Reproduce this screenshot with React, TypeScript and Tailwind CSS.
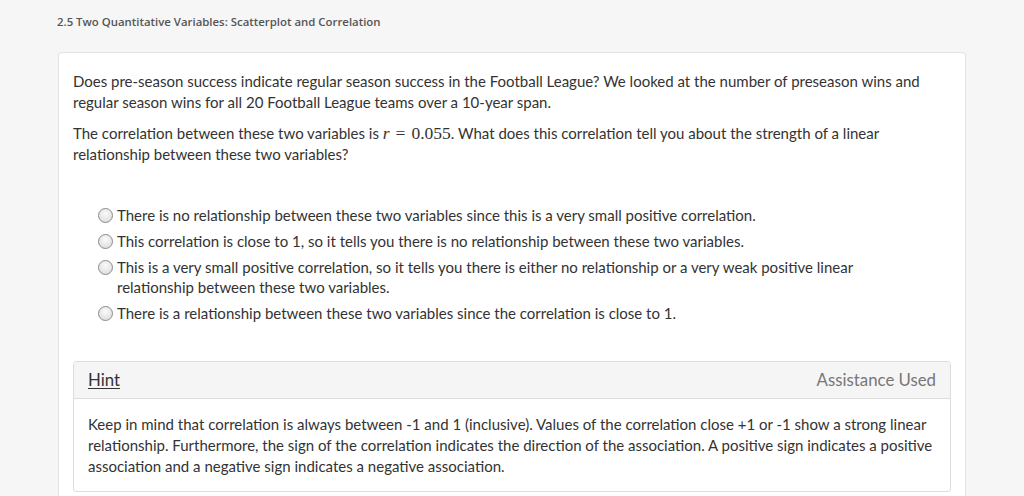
const options = [
  "There is no relationship between these two variables since this is a very small positive correlation.",
  "This correlation is close to 1, so it tells you there is no relationship between these two variables.",
  "This is a very small positive correlation, so it tells you there is either no relationship or a very weak positive linear relationship between these two variables.",
  "There is a relationship between these two variables since the correlation is close to 1.",
];

function Radio() {
  return (
    <span className="mt-[3px] h-[15px] w-[15px] shrink-0 rounded-full border border-[#8a8a8a] bg-[radial-gradient(circle_at_50%_35%,#fafafa,#d8d8d8)]" />
  );
}

export default function App() {
  return (
    <div className="h-[496px] overflow-hidden bg-[#f6f6f6] font-['Lato','Open_Sans',sans-serif] text-[#333]">
      <div className="px-[57px] pt-[13px]">
        <h1 className="font-['Open_Sans',sans-serif] text-[11.4px] font-semibold text-[#555]">
          2.5 Two Quantitative Variables: Scatterplot and Correlation
        </h1>
      </div>

      <div className="mx-[58px] mt-[22px] h-[500px] rounded-[3px] border border-[#e3e3e3] bg-white px-[14px] pt-[18px]">
        <p className="text-[15px] leading-[21px]">
          Does pre-season success indicate regular season success in the Football League? We looked at the number of
          preseason wins and regular season wins for all 20 Football League teams over a 10-year span.
        </p>
        <p className="mt-[10px] text-[15px] leading-[21px]">
          The correlation between these two variables is{" "}
          <span className="font-['Liberation_Serif',serif] text-[17.5px] leading-[0]">
            <i>r</i>
            <span className="mx-[6px]">=</span>0.055
          </span>
          . What does this correlation tell you about the strength of a linear relationship between these two variables?
        </p>

        <div className="mt-[40px] flex flex-col gap-[6px] pl-[25px]">
          {options.map((text) => (
            <label key={text} className="flex gap-[4px] text-[15px] leading-[20px]">
              <Radio />
              <span className="max-w-[760px]">{text}</span>
            </label>
          ))}
        </div>

        <div className="mt-[38px] rounded-[3px] border border-[#dedede]">
          <div className="flex items-center justify-between border-b border-[#dedede] bg-[#f5f5f5] px-[14px] py-[8px] text-[16.8px] leading-[20px]">
            <span className="underline underline-offset-[2px]">Hint</span>
            <span className="text-[#777]">Assistance Used</span>
          </div>
          <p className="px-[14px] pt-[15px] pb-[14px] text-[15px] leading-[21px]">
            Keep in mind that correlation is always between -1 and 1 (inclusive). Values of the correlation close +1 or -1
            show a strong linear relationship. Furthermore, the sign of the correlation indicates the direction of the
            association. A positive sign indicates a positive association and a negative sign indicates a negative
            association.
          </p>
        </div>
      </div>
    </div>
  );
}
